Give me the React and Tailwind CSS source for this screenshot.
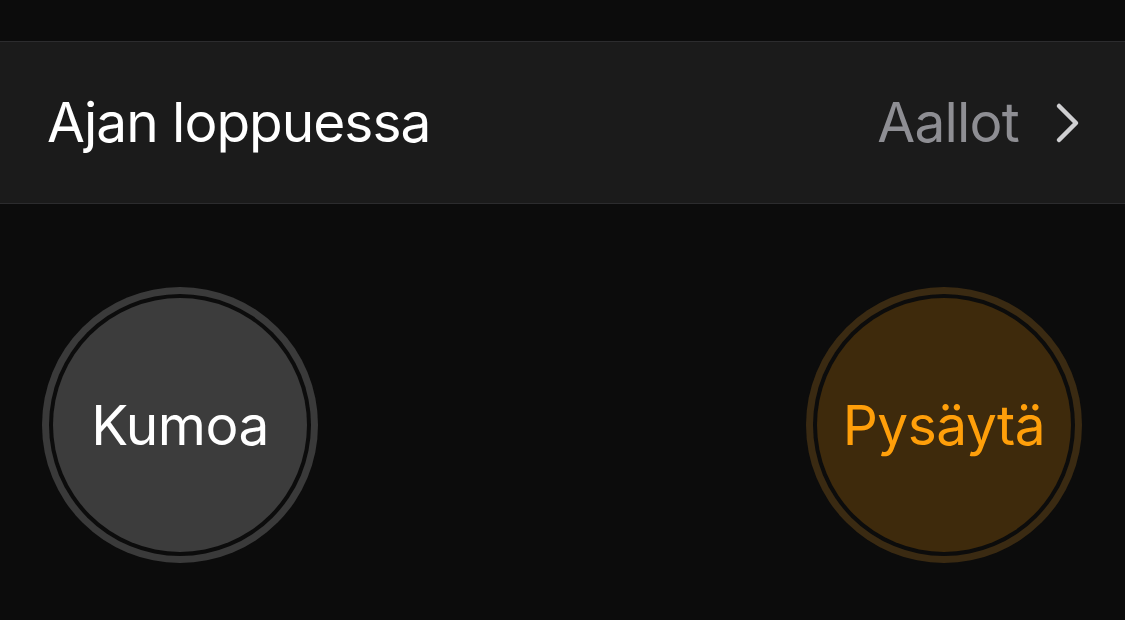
import React from "react";

function Chevron() {
  return (
    <svg width="26" height="42" viewBox="0 0 26 42" className="ml-[36px]">
      <path
        d="M4 4 L21 21 L4 38"
        fill="none"
        stroke="#cfcfd1"
        strokeWidth="4.5"
        strokeLinecap="round"
        strokeLinejoin="round"
      />
    </svg>
  );
}

function RoundButton({ label, ring, fill, text }) {
  return (
    <div className={`w-[276px] h-[276px] rounded-full p-[7px] ${ring}`}>
      <div className="w-full h-full rounded-full bg-[#0c0c0c] p-[4px]">
        <div
          className={`w-full h-full rounded-full flex items-center justify-center ${fill}`}
        >
          <span className={`text-[55px] leading-none tracking-[-0.5px] ${text}`}>{label}</span>
        </div>
      </div>
    </div>
  );
}

export default function App() {
  return (
    <div
      className="w-[1125px] h-[620px] bg-[#0c0c0c] overflow-hidden"
      style={{ fontFamily: "Inter, 'Noto Sans', sans-serif" }}
    >
      <div className="h-[41px]" />
      {/* Sound row */}
      <div className="h-[163px] bg-[#1b1b1b] border-y border-[#2c2c2e] flex items-center justify-between pl-[47px] pr-[44px]">
        <span className="text-[55px] text-white tracking-[-1px]">Ajan loppuessa</span>
        <div className="flex items-center">
          <span className="text-[55px] text-[#8e8e93] tracking-[-0.8px]">Aallot</span>
          <Chevron />
        </div>
      </div>

      {/* Buttons */}
      <div className="flex justify-between pl-[42px] pr-[43px] pt-[83px]">
        <RoundButton
          label="Kumoa"
          ring="bg-[#3a3a3a]"
          fill="bg-[#3c3c3c]"
          text="text-white"
        />
        <RoundButton
          label="Pysäytä"
          ring="bg-[#3a2a12]"
          fill="bg-[#3e2a0c]"
          text="text-[#ff9f0a]"
        />
      </div>
    </div>
  );
}
